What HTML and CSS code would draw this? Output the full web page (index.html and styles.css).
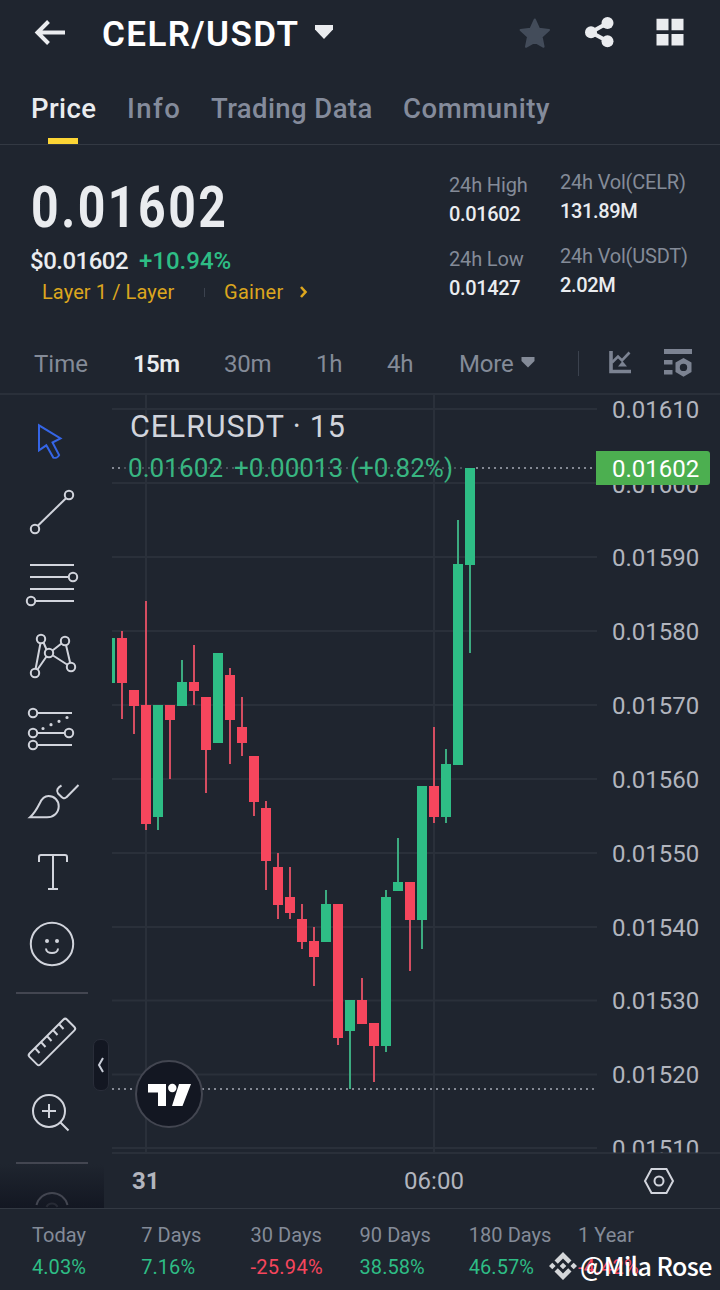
FILE: index.html
```html
<!DOCTYPE html>
<html lang="en">
<head>
<meta charset="utf-8">
<title>CELR/USDT</title>
<link rel="stylesheet" href="styles.css">
</head>
<body>
<div class="app">
  <header class="header">
    <svg class="back" width="32" height="28" viewBox="34 19 32 28"><path d="M65 32.500H38M48.500 21.500 37.500 32.500l11 11" fill="none" stroke="#eaecef" stroke-width="4"/></svg>
    <h1 class="pair">CELR/USDT</h1>
    <svg class="caret" width="20" height="16" viewBox="314 24 20 16"><path d="M315 25h18v4.500L324 39l-9-9.500z" fill="#eaecef"/></svg>
    <svg class="star" width="32" height="32" viewBox="519 16 32 32"><path d="M534.800 18.500l4.200 9.200 10 1.200-7.400 6.900 2 10-8.800-4.900-8.800 4.900 2-10-7.400-6.900 10-1.200z" fill="#434c5a" stroke="#434c5a" stroke-width="2" stroke-linejoin="round"/></svg>
    <svg class="share" width="32" height="32" viewBox="584 16 32 32"><path d="M607.500 23 591 32.300l16.500 9" fill="none" stroke="#eaecef" stroke-width="4"/><circle cx="591" cy="32.300" r="6" fill="#eaecef"/><circle cx="607.500" cy="23" r="6" fill="#eaecef"/><circle cx="607.500" cy="41.200" r="6" fill="#eaecef"/></svg>
    <svg class="apps" width="28" height="28" viewBox="656 18 28 28"><path d="M656.500 18.700h12v11.600h-12zM671.500 18.700h12v11.600h-12zM656.500 34h12v11.600h-12zM671.500 34h12v11.600h-12z" fill="#eaecef"/></svg>
  </header>

  <nav class="tabs">
    <a class="tab active">Price</a>
    <a class="tab info">Info</a>
    <a class="tab data">Trading Data</a>
    <a class="tab community">Community</a>
  </nav>

  <section class="summary">
    <div class="quote">
      <div class="last">0.01602</div>
      <div class="fiat"><span class="usd">$0.01602</span><span class="up">+10.94%</span></div>
      <div class="tags"><span class="layer">Layer 1 / Layer</span><i></i><span class="gainer">Gainer</span>
        <svg width="8" height="12" viewBox="0 0 8 12"><path d="M1 1 5.500 6 1 11" fill="none" stroke="#dca61e" stroke-width="2.600"/></svg>
      </div>
    </div>
    <dl class="stats range">
      <dt>24h High</dt><dd>0.01602</dd>
      <dt>24h Low</dt><dd>0.01427</dd>
    </dl>
    <dl class="stats volume">
      <dt>24h Vol(CELR)</dt><dd>131.89M</dd>
      <dt>24h Vol(USDT)</dt><dd>2.02M</dd>
    </dl>
  </section>

  <div class="intervals">
    <span>Time</span><span class="on">15m</span><span>30m</span><span>1h</span><span>4h</span>
    <span class="more">More <svg width="14" height="11" viewBox="0 0 14 11"><path d="M0.500 0h13v4L7 10.500 0.500 4z" fill="#848b98"/></svg></span>
    <i class="sep"></i>
    <svg class="ind" width="24" height="24" viewBox="608 350 24 24"><g fill="none" stroke="#7c8392"><path d="M611 351v20.500h20" stroke-width="3.600"/><path d="M612 362.500l6-6 4 4 7.500-8" stroke-width="2.600"/></g><path d="M618 366.500l4.500-5.500 4.500 5.500z" fill="#7c8392"/></svg>
    <svg class="set" width="30" height="30" viewBox="663 348 30 30"><path d="M664 349h28v5h-28zM664 360h8.500v4.500H664zM664 370h8.500v4.500H664z" fill="#7c8392"/><path d="M683.500 358l8 4.600v9.400l-8 4.700-8-4.700v-9.400zM683.500 363.700a3.700 3.700 0 1 0 0 7.400 3.700 3.700 0 1 0 0-7.400z" fill="#7c8392" fill-rule="evenodd"/></svg>
  </div>

  <main class="workspace">
    <aside class="tools">
      <svg class="tool cursor" viewBox="0 405 104 72"><path d="M39 425.300v25l7.300-5 7 12.300c2.500.8 5-.6 5.800-2.500l-6.600-12.600 8-4z"/></svg>
      <svg class="tool" viewBox="0 477 104 72"><path d="M37.800 525.700 66 498.300"/><circle cx="69" cy="495" r="4.200"/><circle cx="35" cy="529" r="4.200"/></svg>
      <svg class="tool" viewBox="0 549 104 72"><path d="M30 565h44M30 577h38.500M30 589h44M35 601h39"/><circle cx="73" cy="577" r="4.200"/><circle cx="31" cy="601" r="4.200"/></svg>
      <svg class="tool" viewBox="0 621 104 72"><path d="M40.500 643 35.600 669M43.500 642.500l3 7M52.500 650.500l9-7M66 645l4.200 18M53 655.500l14 9M46.500 656.500l-9 13"/><circle cx="41" cy="639" r="4.200"/><circle cx="65" cy="641" r="4.200"/><circle cx="49" cy="653" r="4.200"/><circle cx="35" cy="673" r="4.200"/><circle cx="71" cy="667" r="4.200"/></svg>
      <svg class="tool" viewBox="0 693 104 72"><path d="M37 713h35M37 733h28M37 745h35"/><circle cx="33" cy="713" r="4.200"/><circle cx="33" cy="733" r="4.200"/><circle cx="69" cy="733" r="4.200"/><circle cx="33" cy="745" r="4.200"/><path d="M43 728.500h.01M51 724.700h.01M59 721.300h.01M67 717.500h.01" stroke-width="3.200" stroke-linecap="round"/></svg>
      <svg class="tool" viewBox="0 765 104 72"><path d="M30 817.300c4.500-4 7-8.500 9.500-13.500 2-4.500 4.500-7.700 9-7.700 6 0 10.200 4.500 10.200 10.200 0 6.500-5 11-11.700 11zM61.500 785.500c-4 2-5.500 5.300-3.500 8 2 2 3.500 3.600 5 4.500 1.300.5 2.500.3 3.500-.8L78.500 785"/></svg>
      <svg class="tool" viewBox="0 837 104 72"><path d="M39 862v-5q0-2 2-2h24q2 0 2 2v5M53 855v34M48 889h10"/></svg>
      <svg class="tool" viewBox="0 909 104 72"><circle cx="52" cy="944" r="21.200"/><path d="M46 948.500c0 6 12 6 12 0"/><path d="M47 941h.01M57 941h.01" stroke-width="4" stroke-linecap="round"/></svg>
      <hr>
      <svg class="tool" viewBox="0 1006 104 72"><path d="M29.500 1053.500 63.500 1019.500q1.700-1.700 3.400 0l7.500 7.500q1.700 1.700 0 3.400l-34 34q-1.700 1.700-3.400 0l-7.500-7.500q-1.700-1.700 0-3.400zM35 1048l4.500 5M41 1042l4.500 5M47 1036l4.500 5M53 1030l4.500 5M59 1024l4.500 5"/></svg>
      <svg class="tool" viewBox="0 1078 104 72"><circle cx="49" cy="1111" r="16"/><path d="M42 1111h14M49 1104v14M60 1122l8.500 8.500"/></svg>
      <hr class="last-rule">
      <div class="faded"><svg class="tool dim" viewBox="0 1164 104 44"><path d="M36.500 1208a16 16 0 0 1 31 0" transform="translate(0 -3)"/><path d="M46.500 1207a6 6 0 0 1 11 0" opacity=".4"/></svg></div>
      <button class="collapse"><svg width="8" height="18" viewBox="0 0 8 18"><path d="M6 2 2 9l4 7" fill="none" stroke="#c9cdd8" stroke-width="2"/></svg></button>
    </aside>
    <svg class="chart" width="616" height="813" viewBox="104 395 616 813">
      <defs><clipPath id="pane"><path d="M104 395h616v757.500H104z"/></clipPath></defs>
      <g class="grid">
        <path d="M112 409h485M112 483h485M112 557h485M112 631h485M112 705h485M112 779h485M112 853h485M112 927h485M112 1000.500h485M112 1074.500h485M112 1148h485M146 395v757M434 395v757M112 1153h608"/>
      </g>
      <g class="dots"><path d="M112 468h12M476 468h120M112 1089h484"/><path class="soft" d="M124 468h340"/></g>
      <g class="w-down"><path d="M122 631v88M134 690v44M146 601v229M170 705v74M194 645v60M206 697v96M230 668v96M242 697v59M254 756v60M266 801v89M278 853v66M290 867v52M302 904v45M314 927v59M338 904v141M362 978v46M374 1023v59M410 882v89M434 727v96"/></g>
      <g class="w-up"><path d="M158 705v125M182 660v46M326 890v52M350 1000v89M386 890v162M398 838v53M422 786v163M446 749v74M458 520v245M470 468v185"/></g>
      <g class="b-down"><path d="M122 638v45M134 690v16M146 705v119M170 705v15M194 682v9M206 697v53M230 675v45M242 727v16M254 756v46M266 808v53M278 867v38M290 897v16M302 919v23M314 941v16M338 904v134M362 1000v24M374 1023v23M410 882v38M434 786v31"/></g>
      <g class="b-up"><path d="M158 705v112M182 682v24M218 653v90M326 904v38M350 1000v31M386 897v149M398 882v9M422 786v134M446 764v53M458 564v201M470 468v97"/></g>
      <path d="M112 638h3v45h-3z" fill="#2ebd85"/>
      <text class="symbol" x="130" y="437" textLength="215">CELRUSDT · 15</text>
      <g class="delta"><text x="128" y="477" textLength="95">0.01602</text><text x="234" y="477" textLength="109">+0.00013</text><text x="350" y="477" textLength="103">(+0.82%)</text></g>
      <g class="axis" clip-path="url(#pane)">
        <text x="612" y="418">0.01610</text><text x="612" y="493">0.01600</text><text x="612" y="566">0.01590</text><text x="612" y="640">0.01580</text><text x="612" y="714">0.01570</text><text x="612" y="788">0.01560</text><text x="612" y="862">0.01550</text><text x="612" y="936">0.01540</text><text x="612" y="1009">0.01530</text><text x="612" y="1083">0.01520</text><text x="612" y="1157">0.01510</text>
      </g>
      <path d="M596 451h111q3 0 3 3v28q0 3-3 3H596z" fill="#4caf50"/>
      <g class="axis"><text class="now" x="612" y="477">0.01602</text><text class="day" x="132" y="1189">31</text><text x="404" y="1189" textLength="60">06:00</text></g>
      <path d="M651.500 1169h15l6.500 12-6.500 12h-15l-6.500-12z" fill="none" stroke="#d1d4dc" stroke-width="2"/><circle cx="659" cy="1181" r="4.500" fill="none" stroke="#d1d4dc" stroke-width="2"/>
      <circle cx="169" cy="1094" r="33" fill="#131722" stroke="#434651" stroke-width="2"/>
      <path d="M148 1084h18v22h-8v-13.500h-10zM179 1084h12l-8.500 22h-10.500z" fill="#fff"/><circle cx="172.300" cy="1088" r="4.200" fill="#fff"/>
    </svg>
  </main>

  <footer class="performance">
    <div><b>Today</b><span class="up">4.03%</span></div>
    <div><b>7 Days</b><span class="up">7.16%</span></div>
    <div><b>30 Days</b><span class="down">-25.94%</span></div>
    <div><b>90 Days</b><span class="up">38.58%</span></div>
    <div><b>180 Days</b><span class="up">46.57%</span></div>
    <div><b>1 Year</b><span class="down">-4.42%</span></div>
  </footer>
  <div class="author">
    <svg width="28" height="28" viewBox="0 0 28 28"><g fill="#d5d7da"><path d="M14 0l8.500 8.500-3.300 3.300L14 6.600l-5.200 5.200-3.300-3.300zM14 28l8.500-8.500-3.300-3.300L14 21.400l-5.200-5.200-3.300 3.300zM3.300 10.700 6.600 14l-3.300 3.300L0 14zM24.700 10.700 28 14l-3.300 3.300-3.300-3.300zM14 10.700l3.300 3.300-3.300 3.300-3.300-3.300z"/></g></svg>
    <span>@Mila Rose</span>
  </div>
</div>
</body>
</html>
```
FILE: styles.css
```css
* { box-sizing: border-box; }
body { margin: 0; background: #1f252f; font-family: Roboto, "Liberation Sans", sans-serif; }
.app { position: relative; width: 720px; height: 1290px; overflow: hidden; color: #eaecef; white-space: nowrap; }
svg { display: block; flex: none; }

.header { display: flex; align-items: center; height: 65px; padding-left: 34px; }
.pair { margin: 4px 0 0 36px; width: 212px; font-size: 35px; line-height: 40px; font-weight: 600; letter-spacing: 1.4px; color: #fff; }
.caret { margin-top: -1px; }
.star { margin-left: 185px; }
.share { margin-left: 33px; margin-top: -1px; }
.apps { margin-left: 40px; margin-top: -2px; }

.tabs { display: flex; height: 80px; padding-left: 31px; border-bottom: 1px solid #333943; }
.tab { position: relative; height: 79px; line-height: 87px; font-size: 27.500px; font-weight: 500; color: #848b9b; }
.tab.active { width: 96px; letter-spacing: .4px; color: #eaecef; }
.tab.active::after { content: ""; position: absolute; left: 17px; bottom: 0; width: 30px; height: 6px; background: #fcd535; }
.info { width: 84px; letter-spacing: 1.500px; }
.data { width: 192px; letter-spacing: .4px; }
.community { letter-spacing: .6px; }

.summary { display: flex; height: 186px; }
.quote { width: 449px; padding: 31px 0 0 31px; }
.last { width: 200px; height: 60px; line-height: 64px; font-size: 57px; font-weight: 700; letter-spacing: 3px; transform: scaleX(.845); transform-origin: left; }
.fiat { display: flex; height: 50px; line-height: 51px; font-size: 24px; font-weight: 500; }
.usd { width: 108px; margin-left: -1px; letter-spacing: -.5px; }
.fiat .up { margin-left: 1px; }
.up { color: #2ebd85; }
.down { color: #f6465d; }
.tags { display: flex; align-items: center; height: 20px; margin-top: -4px; padding-left: 11px; font-size: 20px; letter-spacing: .1px; color: #dca61e; }
.layer { width: 162px; }
.tags i { width: 1px; height: 9px; margin-right: 19px; background: #3b424e; }
.gainer { width: 76px; letter-spacing: .3px; }
.stats { margin: 0; font-size: 20px; line-height: 29px; letter-spacing: -.15px; }
.stats dt { color: #848b98; }
.stats dd { margin: 0 0 16px; font-weight: 500; letter-spacing: -.35px; }
.range { width: 111px; padding-top: 26px; }
.volume { padding-top: 23px; letter-spacing: -.2px; }

.intervals { display: flex; align-items: center; height: 64px; padding-left: 34px; padding-top: 3px; border-bottom: 2px solid #2a303a; font-size: 24px; color: #848b98; }
.intervals span { width: 92px; flex: none; letter-spacing: -.2px; }
.intervals span:first-child { width: 99px; letter-spacing: 0; }
.intervals .on { width: 91px; color: #eaecef; font-weight: 600; letter-spacing: -.6px; }
.intervals span:nth-child(4) { width: 71px; }
.intervals span:nth-child(5) { width: 72px; }
.intervals .more { display: flex; align-items: center; gap: 8px; width: 119px; }
.more svg { margin-top: -3px; }
.sep { width: 1px; height: 25px; margin-right: 29px; background: #3b424e; }
.ind { margin-top: -3px; }
.set { margin-left: 31px; margin-top: -1px; }

.workspace { display: flex; height: 813px; }
.tools { position: relative; width: 104px; padding-top: 10px; }
.tool { width: 104px; height: 72px; fill: none; stroke: #d1d4dc; stroke-width: 2; }
.cursor { stroke: #3565e5; }
.tools hr { width: 72px; height: 2px; margin: 11px auto 12px 16px; border: 0; background: #434651; }
.tools .last-rule { margin: 12px 0 0 16px; }
.tools .faded { height: 44px; background: linear-gradient(#1f252f, #131722); }
.dim { height: 44px; stroke: #434651; }
.collapse { position: absolute; left: 93px; top: 644px; width: 16px; height: 52px; padding: 0 0 0 3px; border: 1px solid #292d39; border-radius: 7px; background: #131722; }
.grid path { fill: none; stroke: #2a303a; stroke-width: 2; }
.dots path { stroke: #848994; stroke-width: 2; stroke-dasharray: 2 4; }
.dots .soft { stroke: #4a505b; }
.w-down path { stroke: #d54d61; stroke-width: 2; }
.w-up path { stroke: #3cab80; stroke-width: 2; }
.b-down path { stroke: #f6465d; stroke-width: 10; }
.b-up path { stroke: #2ebd85; stroke-width: 10; }
.symbol { font-size: 30.500px; fill: #d1d4dc; }
.delta { font-size: 26px; fill: #38b581; }
.axis { font-size: 24px; fill: #b2b5be; }
.axis .now { fill: #fff; }
.axis .day { font-weight: 700; }

.performance { display: flex; height: 82px; padding: 10px 0 0 32px; border-top: 1px solid #333943; }
.performance div { width: 109.200px; flex: none; display: flex; flex-direction: column; font-size: 20px; line-height: 32px; letter-spacing: .05px; }
.performance b { font-weight: 400; color: #848b98; }
.performance .down { letter-spacing: .3px; }
.author { position: absolute; left: 549px; top: 1250px; display: flex; align-items: center; gap: 3px; height: 32px; font: 500 25px/32px "Noto Sans CJK SC", "Noto Sans", sans-serif; letter-spacing: -.55px; color: #fff; }
.author span { margin-top: -2px; }
```
